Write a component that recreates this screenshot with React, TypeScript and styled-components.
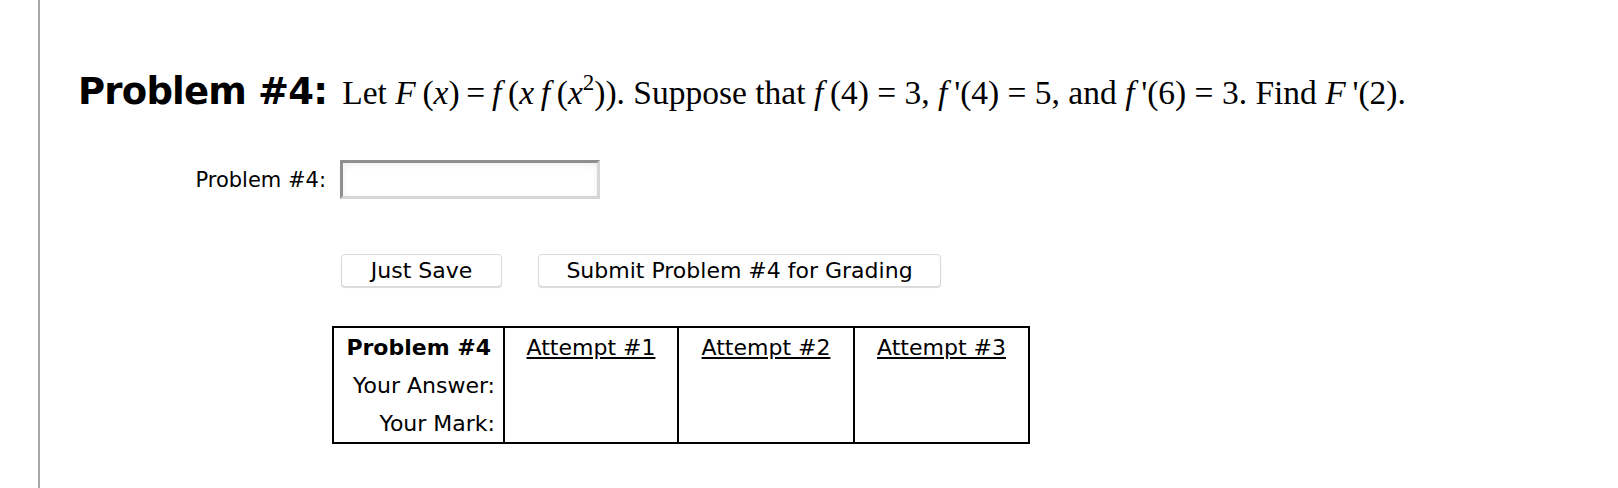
import styled, { createGlobalStyle } from 'styled-components';

const GlobalStyle = createGlobalStyle`
  body {
    margin: 0;
    background: #fff;
    font-family: 'DejaVu Sans', Verdana, sans-serif;
    color: #000;
  }
`;

const attempts = ['Attempt #1', 'Attempt #2', 'Attempt #3'];

const App = () => {
  return (
    <>
      <GlobalStyle />
      <Page>
        <Statement>
          <Heading>Problem #4:</Heading>
          <MathText>
            Let <I>F</I>&thinsp;(<I>x</I>)&thinsp;=&thinsp;<I>f</I>&thinsp;(<I>x</I>&thinsp;<I>f</I>&thinsp;(<I>x</I>
            <Sup>2</Sup>)). Suppose that <I>f</I>&thinsp;(4) = 3, <I>f</I>&thinsp;'(4) = 5, and{' '}
            <I>f</I>&thinsp;'(6) = 3. Find <I>F</I>&thinsp;'(2).
          </MathText>
        </Statement>

        <AnswerRow>
          <Label htmlFor='answer'>Problem #4:</Label>
          <AnswerInput id='answer' type='text' />
        </AnswerRow>

        <ButtonRow>
          <Button $width={161}>Just Save</Button>
          <Button $width={403}>Submit Problem #4 for Grading</Button>
        </ButtonRow>

        <AttemptTable>
          <colgroup>
            <col style={{ width: 171 }} />
            <col style={{ width: 174 }} />
            <col style={{ width: 176 }} />
            <col style={{ width: 175 }} />
          </colgroup>
          <tbody>
            <tr>
              <RowHead $bold>Problem #4</RowHead>
              {attempts.map((a) => (
                <AttemptCell key={a}>
                  <AttemptLink href='#'>{a}</AttemptLink>
                </AttemptCell>
              ))}
            </tr>
            <tr>
              <RowHead>Your Answer:</RowHead>
              {attempts.map((a) => (
                <AttemptCell key={a} />
              ))}
            </tr>
            <tr>
              <RowHead>Your Mark:</RowHead>
              {attempts.map((a) => (
                <AttemptCell key={a} />
              ))}
            </tr>
          </tbody>
        </AttemptTable>
      </Page>
    </>
  );
};

const Page = styled.div`
  margin-left: 38px;
  min-height: 488px;
  box-sizing: border-box;
  border-left: 2px solid #a8a8a8;
  padding: 70px 0 0 38px;
`;

const Statement = styled.div`
  display: flex;
  align-items: baseline;
  gap: 15px;
`;

const Heading = styled.h2`
  margin: 0;
  font-family: 'DejaVu Sans', Verdana, sans-serif;
  font-size: 37px;
  font-weight: bold;
  letter-spacing: -0.8px;
  line-height: 44px;
`;

const MathText = styled.p`
  margin: 0;
  font-family: 'Liberation Serif', 'Times New Roman', serif;
  font-size: 33.5px;
  line-height: 44px;
  white-space: nowrap;
`;

const I = styled.i`
  font-style: italic;
`;

const Sup = styled.sup`
  font-size: 23px;
  line-height: 0;
  vertical-align: 14px;
`;

const AnswerRow = styled.div`
  display: flex;
  align-items: center;
  margin-top: 45px;
`;

const Label = styled.label`
  width: 248px;
  padding-right: 14px;
  text-align: right;
  font-size: 21px;
`;

const AnswerInput = styled.input`
  box-sizing: border-box;
  width: 260px;
  height: 39px;
  margin: 0;
  border-style: solid;
  border-width: 3px;
  border-color: #8f8f8f #d6d6d6 #d6d6d6 #8f8f8f;
  background: #fff;
  box-shadow: inset 0 2px 6px rgba(0, 0, 0, 0.07);
  outline: none;
`;

const ButtonRow = styled.div`
  display: flex;
  gap: 36px;
  margin: 55px 0 0 263px;
`;

const Button = styled.button<{ $width: number }>`
  width: ${(p) => p.$width}px;
  height: 33px;
  padding: 0;
  background: #fff;
  border: 1px solid #d9d9d9;
  border-radius: 4px;
  box-shadow: 0 1px 1px rgba(0, 0, 0, 0.15);
  font-family: 'DejaVu Sans', Verdana, sans-serif;
  font-size: 22px;
  color: #000;
`;

const AttemptTable = styled.table`
  width: 696px;
  margin: 39px 0 0 254px;
  table-layout: fixed;
  border: 2px solid #000;
  border-collapse: collapse;
  font-size: 22px;
`;

const RowHead = styled.td<{ $bold?: boolean }>`
  height: 38px;
  padding: 0 ${(p) => (p.$bold ? 12 : 8)}px 0 0;
  text-align: right;
  font-weight: ${(p) => (p.$bold ? 'bold' : 'normal')};
  border-right: 2px solid #000;
  vertical-align: middle;
  white-space: nowrap;
`;

const AttemptCell = styled.td`
  padding: 0;
  text-align: center;
  border-right: 2px solid #000;
  vertical-align: middle;
`;

const AttemptLink = styled.a`
  color: #000;
  text-decoration: underline;
`;

export default App;
